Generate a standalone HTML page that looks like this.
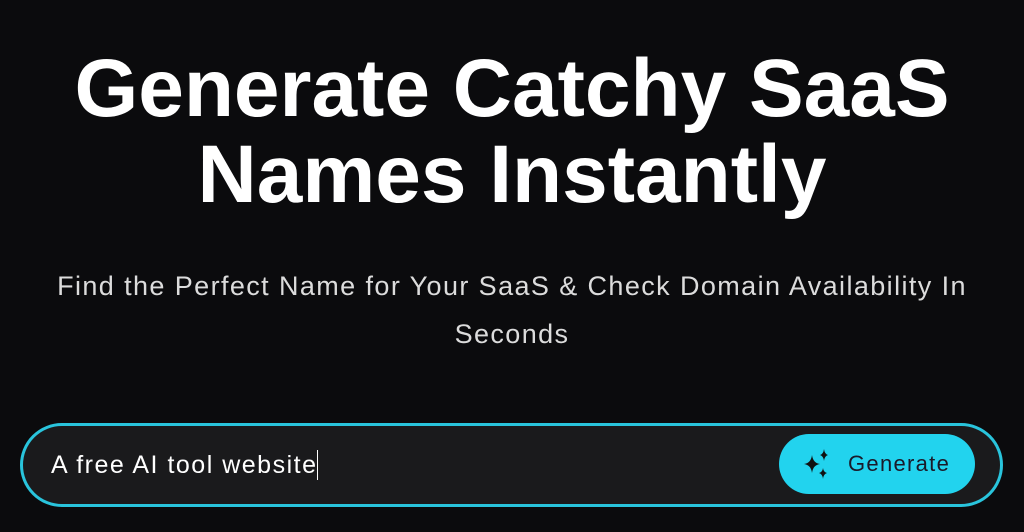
<!DOCTYPE html>
<html><head><meta charset="utf-8"><style>
body{margin:0;width:1024px;height:532px;background:#0b0b0d;overflow:hidden;font-family:"Liberation Sans",sans-serif;position:relative}
h1{position:absolute;left:0;width:1024px;top:46px;margin:0;text-align:center;color:#fff;font-size:82px;line-height:86px;font-weight:bold}
p{position:absolute;left:0;width:1024px;top:262px;margin:0;text-align:center;color:#dcdcdc;font-size:27px;line-height:48px;letter-spacing:1.4px}
.box{position:absolute;left:20px;top:423px;width:977px;height:78px;border:3px solid #29c4dc;border-radius:42px;background:#1a1a1c}
.txt{position:absolute;left:28px;top:24px;color:#fff;font-size:25px;letter-spacing:1.5px}
.cur{display:inline-block;width:1px;height:30px;background:#fff;vertical-align:-7px}
.btn{position:absolute;left:756px;top:8px;width:196px;height:60px;border-radius:30px;background:#22d3ee;color:#1a1a2a;font-size:22px;letter-spacing:1.3px}
.btn svg{position:absolute;left:22px;top:13px}
.btn span{position:absolute;left:69px;top:17px}
</style></head><body>
<h1>Generate Catchy SaaS<br>Names Instantly</h1>
<p>Find the Perfect Name for Your SaaS &amp; Check Domain Availability In<br>Seconds</p>
<div class="box"><div class="txt">A free AI tool website<span class="cur"></span></div>
<div class="btn"><svg width="34" height="34" viewBox="0 0 34 34" fill="#111"><path d="M11 8 Q12 16 19 17 Q12 18 11 26 Q10 18 3 17 Q10 16 11 8Z"/><path d="M23 2 Q23.6 7 27 8 Q23.6 9 23 14 Q22.4 9 19 8 Q22.4 7 23 2Z"/><path d="M22 21 Q22.5 25 26 26 Q22.5 27 22 32 Q21.5 27 18 26 Q21.5 25 22 21Z"/></svg><span>Generate</span></div></div>
</body></html>
